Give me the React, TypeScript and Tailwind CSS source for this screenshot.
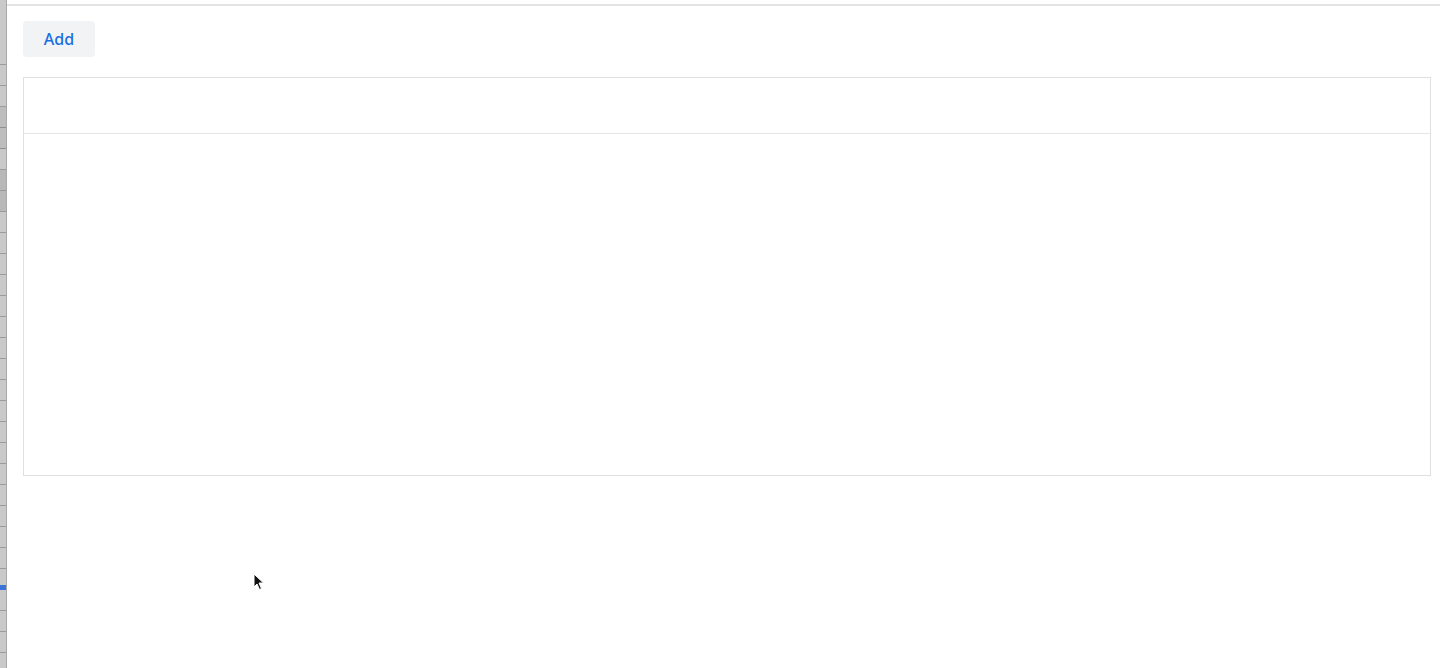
const stripRows = Array.from({ length: 31 }, (_, i) => i);

function SideStrip() {
  return (
    <div className="relative w-[7px] shrink-0 bg-[#c9c9c9] border-r border-r-[#a9a9a9] overflow-hidden">
      <div className="flex flex-col pt-[44px]">
        {stripRows.map((i) => (
          <div
            key={i}
            className={
              i === 3 || i === 4
                ? "h-[21px] border-b border-b-[#8f8f8f] bg-[#bdbdbd]"
                : i === 6 || i === 7
                ? "h-[21px] border-b border-b-[#9a9a9a] bg-[#b8b8b8]"
                : "h-[21px] border-b border-b-[#9c9c9c]"
            }
          />
        ))}
      </div>
      <div className="absolute left-0 top-[585px] h-[5px] w-[7px] bg-[#3b73d9]" />
    </div>
  );
}

function Cursor() {
  return (
    <svg
      className="absolute left-[253px] top-[573px]"
      width="12"
      height="18"
      viewBox="0 0 12 18"
    >
      <path
        d="M1 1 L1 14 L4 11 L6.5 16.5 L8.5 15.5 L6 10 L10.5 10 Z"
        fill="#111"
        stroke="#fff"
        strokeWidth="1"
      />
    </svg>
  );
}

export default function App() {
  return (
    <div className="relative flex h-[668px] w-full bg-white font-['Noto_Sans',sans-serif]">
      <SideStrip />
      <div className="flex flex-1 flex-col">
        <div className="mt-[4px] h-[2px] bg-[#e3e3e3]" />
        <div className="flex flex-col pl-[16px] pr-[9px]">
          <div className="mt-[15px]">
            <button className="h-[36px] w-[72px] rounded-[4px] bg-[#f1f3f4] text-[16px] font-medium text-[#1a6ee0]">
              Add
            </button>
          </div>
          <div className="mt-[20px] flex h-[399px] flex-col border border-[#e0e0e0]">
            <div className="h-[56px] border-b border-b-[#e6e6e6]" />
            <div className="flex-1" />
          </div>
        </div>
      </div>
      <Cursor />
    </div>
  );
}
